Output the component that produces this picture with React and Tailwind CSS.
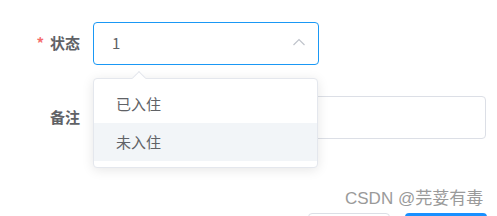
export default function App() {
  return (
    <div
      className="relative w-[497px] h-[216px] overflow-hidden bg-white pt-[22px]"
      style={{ fontFamily: '"Noto Sans CJK SC", "Noto Sans", sans-serif' }}
    >
      <div className="flex h-[43px] items-center">
        <label className="w-[93px] pr-[13px] text-right text-[15px] font-bold text-[#606266]">
          <span className="mr-[6px] text-[#f56c6c]">*</span>状态
        </label>
        <div className="flex h-[43px] w-[226px] items-center justify-between rounded-[4px] border border-[#1a98f5] pl-[18px] pr-[13px] text-[15px] text-[#606266]">
          <span>1</span>
          <svg width="12" height="8" viewBox="0 0 12 8" className="mt-[-3px]">
            <polyline points="0.5,7 6,1.5 11.5,7" fill="none" stroke="#c0c4cc" strokeWidth="1.2" />
          </svg>
        </div>
      </div>

      <div className="mt-[31px] flex h-[43px] items-center">
        <label className="w-[93px] pr-[13px] text-right text-[15px] font-bold text-[#606266]">备注</label>
        <div className="h-[43px] w-[393px] rounded-[4px] border border-[#dcdfe6]" />
      </div>

      <div className="mt-[74px] flex justify-end gap-[15px] pr-[10px]">
        <button className="h-[32px] w-[82px] rounded-[4px] border border-[#dcdfe6] bg-white" />
        <button className="h-[32px] w-[82px] rounded-[4px] bg-[#1890ff]" />
      </div>

      <div
        className="absolute left-[345px] top-[186px] text-[17px] text-[#9a9a9a]"
        style={{ fontFamily: '"Liberation Sans", "Noto Sans CJK SC", sans-serif' }}
      >
        CSDN @芫荽有毒
      </div>

      <div className="absolute left-[93px] top-[78px] w-[225px] rounded-[4px] border border-[#e4e7ed] bg-white py-[6px] shadow-[0_2px_12px_0_rgba(0,0,0,0.1)]">
        <div className="absolute left-[40px] top-[-6px] h-[10px] w-[10px] rotate-45 border-l border-t border-[#e4e7ed] bg-white" />
        <ul className="text-[15px] text-[#606266]">
          <li className="flex h-[38px] items-center pl-[22px]">已入住</li>
          <li className="flex h-[38px] items-center bg-[#f2f5f8] pl-[22px]">未入住</li>
        </ul>
      </div>
    </div>
  );
}
